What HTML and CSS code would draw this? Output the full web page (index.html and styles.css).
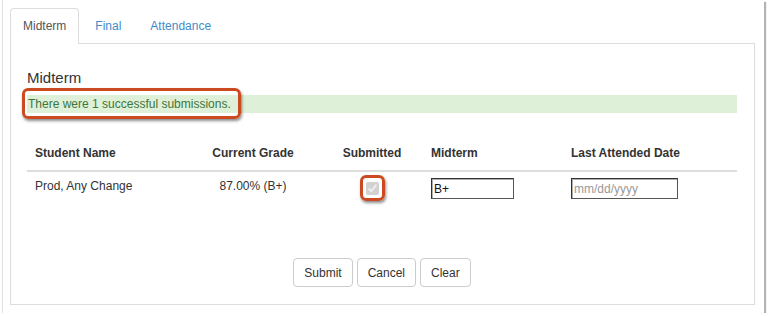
FILE: index.html
```html
<!DOCTYPE html>
<html lang="en">
<head>
  <meta charset="UTF-8">
  <meta name="viewport" content="width=device-width, initial-scale=1.0">
  <title>Gradebook Submission</title>
  <link rel="stylesheet" href="styles.css">
</head>
<body>
  <div class="frame">
    <ul class="tabs">
      <li class="tab active">Midterm</li>
      <li class="tab">Final</li>
      <li class="tab">Attendance</li>
    </ul>

    <div class="panel">
      <h2 class="title">Midterm</h2>

      <div class="alert-wrap">
        <div class="alert">There were 1 successful submissions.</div>
        <span class="callout callout-alert"></span>
      </div>

      <table class="grades">
        <thead>
          <tr>
            <th class="col-name">Student Name</th>
            <th class="col-grade">Current Grade</th>
            <th class="col-sub">Submitted</th>
            <th class="col-mid">Midterm</th>
            <th class="col-date">Last Attended Date</th>
          </tr>
        </thead>
        <tbody>
          <tr>
            <td class="col-name">Prod, Any Change</td>
            <td class="col-grade">87.00% (B+)</td>
            <td class="col-sub">
              <span class="check-wrap">
                <input type="checkbox" class="check" checked disabled>
                <span class="callout callout-check"></span>
              </span>
            </td>
            <td class="col-mid"><input type="text" class="field field-mid" value="B+"></td>
            <td class="col-date"><input type="text" class="field field-date" placeholder="mm/dd/yyyy"></td>
          </tr>
        </tbody>
      </table>

      <div class="buttons">
        <button>Submit</button>
        <button>Cancel</button>
        <button>Clear</button>
      </div>
    </div>
  </div>
</body>
</html>
```

FILE: styles.css
```css
body {
  margin: 0;
  background: #fff;
  color: #333;
  font-family: "Liberation Sans", Arial, sans-serif;
  font-size: 12px;
}
.frame {
  box-sizing: border-box;
  width: 762px;
  height: 313px;
  margin-left: 2px;
  padding: 8px 0 0 7px;
  background: #fff;
  border-left: 1px solid #e2e2e2;
  box-shadow: 2px 2px 1px #b3b3b3;
}
.tabs {
  display: flex;
  align-items: flex-start;
  gap: 3px;
  width: 745px;
  height: 36px;
  box-sizing: border-box;
  margin: 0;
  padding: 0;
  list-style: none;
  border-bottom: 1px solid #ddd;
}
.tab {
  height: 36px;
  box-sizing: border-box;
  padding: 0 12px;
  line-height: 35px;
  color: #428bca;
  border: 1px solid transparent;
  border-bottom: none;
  border-radius: 4px 4px 0 0;
}
.tab.active {
  position: relative;
  color: #555;
  background: #fff;
  border-color: #ddd;
}
.panel {
  width: 745px;
  box-sizing: border-box;
  padding: 25px 17px 17px 16px;
  border: 1px solid #ddd;
  border-top: none;
}
.title {
  margin: 0;
  font-size: 15px;
  font-weight: normal;
  line-height: 17px;
}
.alert-wrap {
  position: relative;
  margin-top: 9px;
}
.alert {
  height: 18px;
  line-height: 18px;
  padding-left: 1px;
  background: #dff0d8;
  color: #3c763d;
}
.callout {
  position: absolute;
  box-sizing: border-box;
  border: 3px solid #cc4a1f;
  border-radius: 6px;
  box-shadow: 1px 2px 3px rgba(0, 0, 0, 0.45);
}
.callout-alert {
  left: -5px;
  top: -7px;
  width: 219px;
  height: 31px;
}
.grades {
  width: 710px;
  margin-top: 24px;
  border-collapse: collapse;
  table-layout: fixed;
}
.grades th,
.grades td {
  padding: 8px;
  line-height: 17px;
  text-align: left;
  vertical-align: top;
}
.grades th {
  font-weight: bold;
  border-bottom: 2px solid #ddd;
}
.grades td {
  padding-top: 6px;
  padding-bottom: 6px;
}
.col-name {
  width: 130px;
}
.grades .col-grade,
.grades .col-sub {
  text-align: center;
  padding-left: 0;
  padding-right: 0;
}
.col-grade {
  width: 160px;
}
.col-sub {
  width: 78px;
}
.grades .col-mid,
.grades .col-date {
  padding-left: 20px;
  padding-right: 0;
}
.col-mid {
  width: 120px;
}
.grades td.col-sub {
  padding-top: 10px;
  line-height: 13px;
}
.check-wrap {
  position: relative;
  display: inline-block;
  width: 13px;
  height: 13px;
  vertical-align: top;
}
.check {
  display: block;
  width: 13px;
  height: 13px;
  margin: 0;
}
.callout-check {
  left: -6px;
  top: -7px;
  width: 25px;
  height: 26px;
}
.field {
  display: block;
  box-sizing: border-box;
  height: 21px;
  padding: 0 2px;
  font-family: "Liberation Sans", Arial, sans-serif;
  font-size: 12px;
  color: #111;
  border: 1px solid #555;
  border-top-color: #333;
  border-left-color: #333;
  box-shadow: inset 1px 1px 0 #b0b0b0;
  border-radius: 0;
}
.field::placeholder {
  color: #999;
}
.field-mid {
  width: 83px;
}
.field-date {
  width: 107px;
}
.buttons {
  display: flex;
  justify-content: center;
  gap: 4px;
  margin-top: 53px;
}
button {
  height: 29px;
  padding: 0 10px;
  font-family: "Liberation Sans", Arial, sans-serif;
  font-size: 12px;
  color: #333;
  background: #fff;
  border: 1px solid #ccc;
  border-radius: 4px;
}
```
